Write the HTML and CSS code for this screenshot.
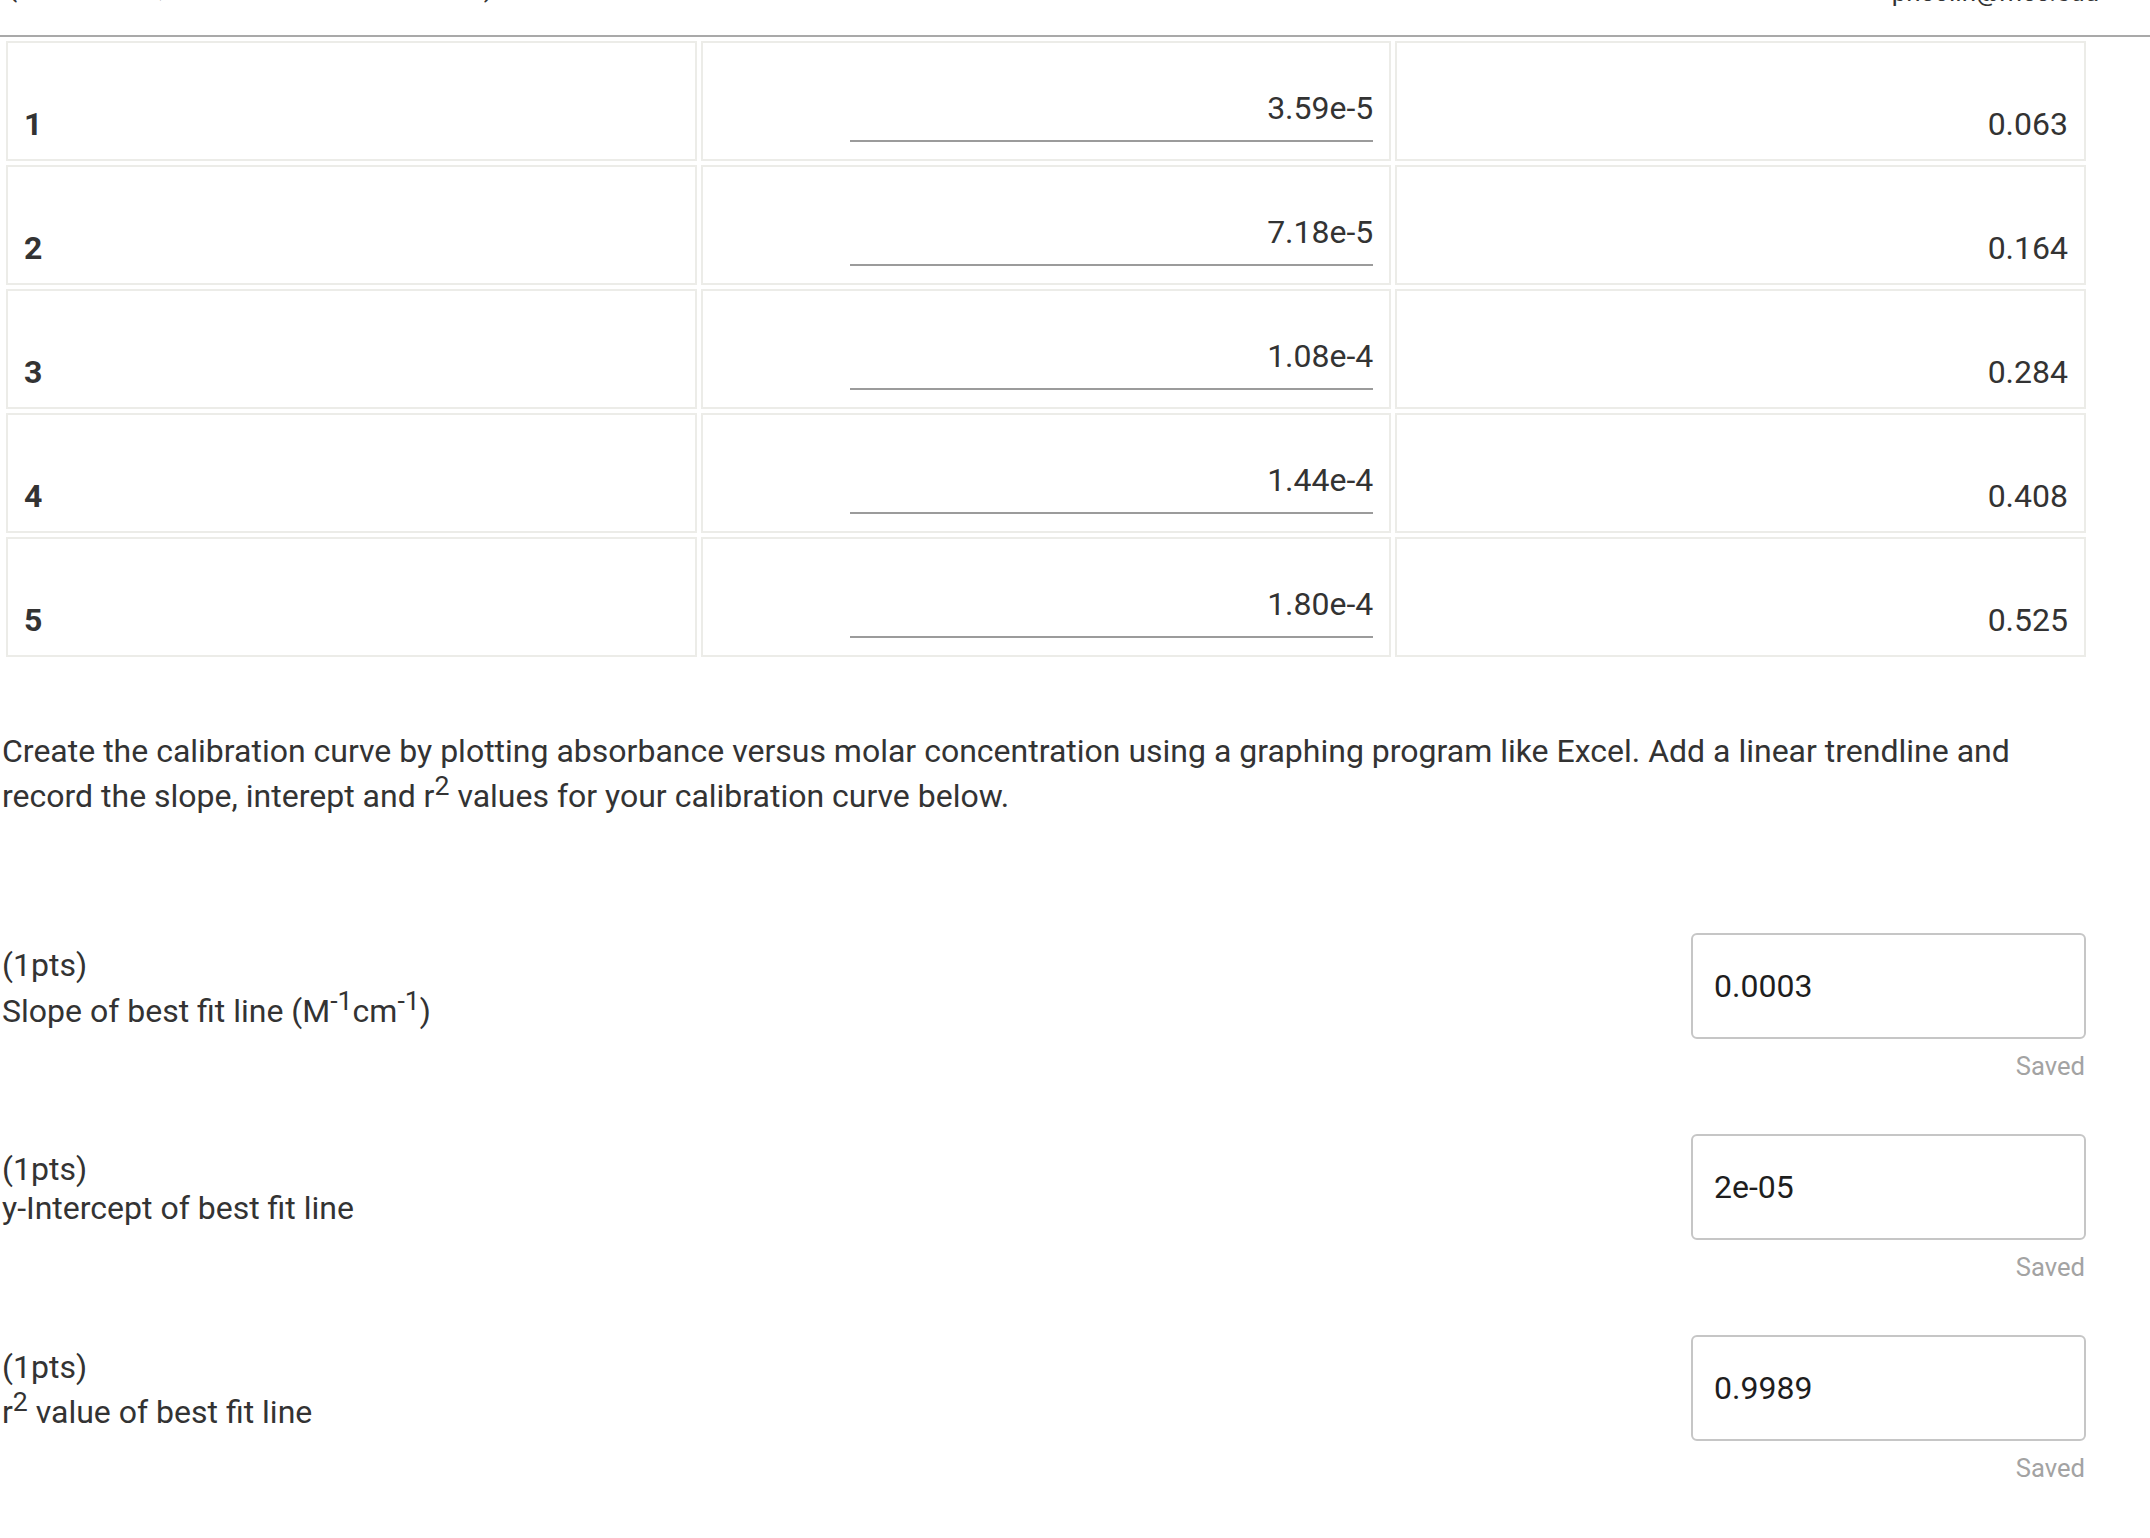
FILE: index.html
```html
<!DOCTYPE html>
<html>
<head>
<meta charset="utf-8">
<link rel="stylesheet" href="styles.css">
</head>
<body>
<header class="topbar">
  <span class="topbar-title">(Beer's Law, Absorbance Calibration)</span>
  <span class="topbar-user">phcolin@mcc.edu</span>
</header>
<main class="page">
  <table class="data-table">
    <tbody>
      <tr>
        <td class="idx">1</td>
        <td class="conc"><div class="entry">3.59e-5</div></td>
        <td class="abs">0.063</td>
      </tr>
      <tr>
        <td class="idx">2</td>
        <td class="conc"><div class="entry">7.18e-5</div></td>
        <td class="abs">0.164</td>
      </tr>
      <tr>
        <td class="idx">3</td>
        <td class="conc"><div class="entry">1.08e-4</div></td>
        <td class="abs">0.284</td>
      </tr>
      <tr>
        <td class="idx">4</td>
        <td class="conc"><div class="entry">1.44e-4</div></td>
        <td class="abs">0.408</td>
      </tr>
      <tr>
        <td class="idx">5</td>
        <td class="conc"><div class="entry">1.80e-4</div></td>
        <td class="abs">0.525</td>
      </tr>
    </tbody>
  </table>

  <p class="instructions">Create the calibration curve by plotting absorbance versus molar concentration using a graphing program like Excel. Add a linear trendline and record the slope, interept and r<sup>2</sup> values for your calibration curve below.</p>

  <section class="questions">
    <div class="question">
      <div class="q-row">
        <div class="q-label">(1pts)<br>Slope of best fit line (M<sup>-1</sup>cm<sup>-1</sup>)</div>
        <input class="q-input" type="text" value="0.0003" readonly>
      </div>
      <div class="saved">Saved</div>
    </div>
    <div class="question">
      <div class="q-row">
        <div class="q-label">(1pts)<br>y-Intercept of best fit line</div>
        <input class="q-input" type="text" value="2e-05" readonly>
      </div>
      <div class="saved">Saved</div>
    </div>
    <div class="question">
      <div class="q-row">
        <div class="q-label">(1pts)<br>r<sup>2</sup> value of best fit line</div>
        <input class="q-input" type="text" value="0.9989" readonly>
      </div>
      <div class="saved">Saved</div>
    </div>
  </section>
</main>
</body>
</html>
```

FILE: styles.css
```css
html, body {
  margin: 0;
  padding: 0;
  background: #ffffff;
}

body {
  font-family: Roboto, "Liberation Sans", sans-serif;
  font-size: 32px;
  line-height: 1.2;
  color: #333333;
}

.topbar {
  height: 35px;
  border-bottom: 2px solid #a9a9a9;
  display: flex;
  justify-content: space-between;
  align-items: flex-start;
  padding: 0 51px 0 7px;
  overflow: hidden;
  font-size: 26px;
}

.topbar-title,
.topbar-user {
  margin-top: -27px;
  line-height: 38px;
  color: #333333;
}

.topbar-title {
  font-size: 30px;
  margin-top: -33px;
}

.page {
  padding: 0 60px 0 2px;
}

.data-table {
  width: 100%;
  border-collapse: separate;
  border-spacing: 4px;
  table-layout: fixed;
}

.data-table tr {
  height: 120px;
}

.data-table td {
  border: 2px solid #ecece8;
  padding: 0 16px 16px 16px;
  vertical-align: bottom;
}

.idx {
  font-weight: 700;
  text-align: left;
}

.entry {
  display: inline-block;
  width: 523px;
  text-align: right;
  border-bottom: 2px solid #9b9b9b;
  padding-bottom: 13px;
  margin-bottom: 1px;
  vertical-align: bottom;
}

.conc {
  text-align: right;
}

.abs {
  text-align: right;
}

.instructions {
  margin: 71px 0 0 0;
}

.questions {
  margin: 118px 4px 0 0;
}

.question {
  display: flex;
  flex-direction: column;
  margin-bottom: 52px;
}

.q-row {
  display: flex;
  justify-content: space-between;
  align-items: center;
}

.q-label {
  padding-top: 3px;
}

.q-input {
  width: 395px;
  height: 106px;
  box-sizing: border-box;
  border: 2px solid #c6c6c6;
  border-radius: 6px;
  padding: 0 21px;
  font-family: Roboto, "Liberation Sans", sans-serif;
  font-size: 32px;
  color: #1e1e1e;
  background: #ffffff;
  outline: none;
}

.saved {
  text-align: right;
  margin-top: 12px;
  padding-right: 1px;
  font-size: 25.6px;
  color: #a3a3a3;
}
```
